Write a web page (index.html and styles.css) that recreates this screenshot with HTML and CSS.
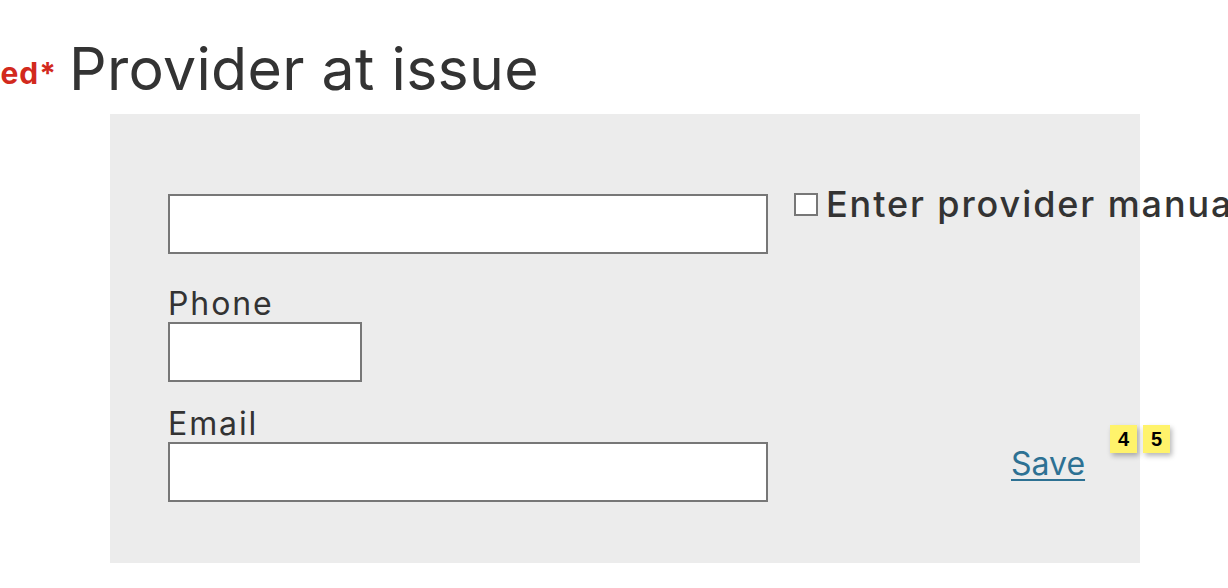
FILE: index.html
```html
<!DOCTYPE html>
<html lang="en">
<head>
<meta charset="utf-8">
<title>Provider at issue</title>
<link rel="stylesheet" href="styles.css">
</head>
<body>
<header class="heading">
  <div class="req-col"><span class="req">Required*</span></div>
  <h1 class="title">Provider at issue</h1>
</header>
<section class="panel">
  <div class="row row-top">
    <input class="field field-wide" type="text" aria-label="Provider">
    <label class="manual">
      <input class="check" type="checkbox">
      <span>Enter provider manually</span>
    </label>
  </div>
  <div class="row row-phone">
    <div class="group">
      <label class="lbl" for="phone">Phone</label>
      <input class="field field-short" id="phone" type="text">
    </div>
  </div>
  <div class="row row-email">
    <div class="group">
      <label class="lbl" for="email">Email</label>
      <input class="field field-wide" id="email" type="text">
    </div>
    <div class="save-wrap">
      <a class="save" href="#">Save</a>
      <span class="badges">
        <span class="badge">4</span>
        <span class="badge">5</span>
      </span>
    </div>
  </div>
</section>
</body>
</html>
```

FILE: styles.css
```css
html, body {
  margin: 0;
  padding: 0;
  overflow: hidden;
  background: #ffffff;
}

body {
  font-family: "Inter", "DejaVu Sans", sans-serif;
  color: #333333;
  width: 1228px;
  height: 588px;
}

.heading {
  display: flex;
  align-items: flex-end;
  padding-top: 39px;
  gap: 12px;
}

.req-col {
  width: 57px;
  flex-shrink: 0;
  display: flex;
  justify-content: flex-end;
  margin-bottom: 12px;
}

.req {
  white-space: nowrap;
  color: #d2291d;
  font-weight: 700;
  font-size: 30px;
  line-height: 28px;
  letter-spacing: 1px;
}

.title {
  margin: 0;
  font-weight: 400;
  font-size: 59px;
  line-height: 60px;
  letter-spacing: 0.3px;
  color: #333333;
  white-space: nowrap;
}

.panel {
  margin: 15px 0 0 110px;
  width: 1030px;
  height: 449px;
  box-sizing: border-box;
  background: #ececec;
  padding: 72px 0 0 58px;
}

.row {
  display: flex;
}

.row-top {
  align-items: flex-start;
}

.row-top .field {
  margin-top: 8px;
}

.field {
  box-sizing: border-box;
  flex-shrink: 0;
  height: 60px;
  border: 2px solid #777777;
  background: #ffffff;
  margin: 0;
  padding: 0 10px;
  font: inherit;
  outline: none;
  border-radius: 0;
}

.field-wide {
  width: 600px;
}

.field-short {
  width: 194px;
}

.manual {
  display: flex;
  align-items: center;
  margin-left: 26px;
  flex-shrink: 0;
  white-space: nowrap;
  font-size: 36px;
  line-height: 36px;
  font-weight: 500;
  letter-spacing: 1.9px;
  color: #333333;
}

.check {
  appearance: none;
  -webkit-appearance: none;
  flex-shrink: 0;
  width: 24px;
  height: 23px;
  margin: 0 8px 0 0;
  box-sizing: border-box;
  border: 2px solid #777777;
  background: #ffffff;
  border-radius: 0;
}

.group {
  display: flex;
  flex-direction: column;
  align-items: flex-start;
  flex-shrink: 0;
}

.lbl {
  font-size: 32px;
  line-height: 36px;
  letter-spacing: 1.9px;
  color: #333333;
}

.row-phone {
  margin-top: 32px;
}

.row-email {
  margin-top: 24px;
  align-items: flex-end;
}

.save-wrap {
  position: relative;
  margin-left: 243px;
  margin-bottom: 20px;
}

.save {
  display: block;
  font-size: 32px;
  line-height: 36px;
  color: #2d7193;
  text-decoration: underline;
  text-decoration-thickness: 2px;
  text-underline-offset: 4px;
}

.badges {
  position: absolute;
  left: 99px;
  top: -21px;
  display: flex;
  gap: 6px;
}

.badge {
  width: 27px;
  height: 28px;
  background: #fff36b;
  box-shadow: 2px 3px 5px rgba(0, 0, 0, 0.28);
  display: flex;
  align-items: center;
  justify-content: center;
  font-family: "Liberation Sans", Arial, sans-serif;
  font-weight: 700;
  font-size: 20px;
  color: #000000;
}
```
